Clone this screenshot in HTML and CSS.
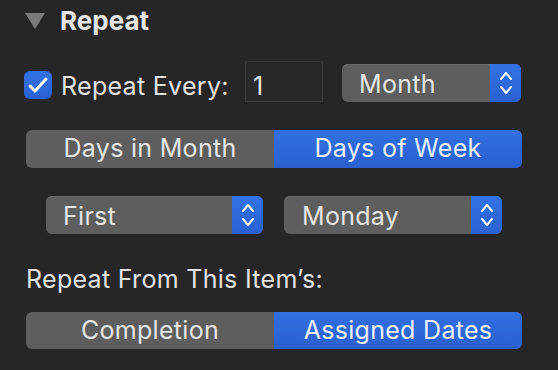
FILE: index.html
```html
<!DOCTYPE html>
<html>
<head>
<meta charset="utf-8">
<link rel="stylesheet" href="styles.css">
</head>
<body>
<div class="panel">
  <div class="header">
    <svg class="disclosure" width="20" height="16" viewBox="0 0 20 16"><polygon points="0,0 20,0 10,16" fill="#7a7a7a"/></svg>
    <span class="title">Repeat</span>
  </div>

  <div class="row1">
    <span class="checkbox">
      <svg width="28" height="28" viewBox="0 0 28 28"><polyline points="6,15 11,20 22,8" fill="none" stroke="#fff" stroke-width="3" stroke-linecap="round" stroke-linejoin="round"/></svg>
    </span>
    <span class="label every">Repeat Every:</span>
    <span class="field">1</span>
    <div class="popup month">
      <span class="popup-text">Month</span>
      <span class="popup-arrows">
        <svg width="14" height="24" viewBox="0 0 14 24"><polyline points="2,8 7,2 12,8" fill="none" stroke="#fff" stroke-width="2" stroke-linecap="round" stroke-linejoin="round"/><polyline points="2,16 7,22 12,16" fill="none" stroke="#fff" stroke-width="2" stroke-linecap="round" stroke-linejoin="round"/></svg>
      </span>
    </div>
  </div>

  <div class="segmented seg1">
    <span class="seg">Days in Month</span>
    <span class="seg active">Days of Week</span>
  </div>

  <div class="row3">
    <div class="popup first">
      <span class="popup-text">First</span>
      <span class="popup-arrows">
        <svg width="14" height="24" viewBox="0 0 14 24"><polyline points="2,8 7,2 12,8" fill="none" stroke="#fff" stroke-width="2" stroke-linecap="round" stroke-linejoin="round"/><polyline points="2,16 7,22 12,16" fill="none" stroke="#fff" stroke-width="2" stroke-linecap="round" stroke-linejoin="round"/></svg>
      </span>
    </div>
    <div class="popup monday">
      <span class="popup-text">Monday</span>
      <span class="popup-arrows">
        <svg width="14" height="24" viewBox="0 0 14 24"><polyline points="2,8 7,2 12,8" fill="none" stroke="#fff" stroke-width="2" stroke-linecap="round" stroke-linejoin="round"/><polyline points="2,16 7,22 12,16" fill="none" stroke="#fff" stroke-width="2" stroke-linecap="round" stroke-linejoin="round"/></svg>
      </span>
    </div>
  </div>

  <div class="label from">Repeat From This Item’s:</div>

  <div class="segmented seg2">
    <span class="seg">Completion</span>
    <span class="seg active">Assigned Dates</span>
  </div>
</div>
</body>
</html>
```

FILE: styles.css
```css
html, body {
  margin: 0;
  padding: 0;
  background: #262626;
}
body {
  width: 558px;
  height: 370px;
  overflow: hidden;
  font-family: Inter, "Liberation Sans", sans-serif;
  color: #e3e3e3;
  font-size: 25px;
  letter-spacing: 0.3px;
  line-height: 24px;
}
.panel {
  display: flex;
  flex-direction: column;
  align-items: flex-start;
}
.header {
  display: flex;
  align-items: center;
  height: 42px;
  margin-left: 25px;
}
.disclosure {
  display: block;
  margin-right: 15px;
}
.title {
  font-size: 26px;
  line-height: 26px;
  letter-spacing: 0;
  font-weight: 700;
  color: #e6e6e6;
}
.row1 {
  display: flex;
  align-items: flex-start;
  margin-top: 19px;
  margin-left: 24px;
  height: 41px;
}
.checkbox {
  width: 28px;
  height: 28px;
  margin-top: 10px;
  border-radius: 6px;
  background: linear-gradient(#3272e6, #2b61d2);
  display: block;
}
.checkbox svg { display: block; }
.label {
  color: #e3e3e3;
}
.every {
  margin-left: 9px;
  margin-top: 13px;
  width: 164px;
  white-space: nowrap;
}
.field {
  box-sizing: border-box;
  width: 78px;
  height: 41px;
  margin-left: 20px;
  background: #292929;
  border: 1px solid #3d3d3d;
  border-top-color: #353535;
  padding: 12px 0 0 7px;
  color: #e6e6e6;
}
.popup {
  display: flex;
  box-sizing: border-box;
  height: 38px;
  border-radius: 6px;
  background: #5e5e5e;
  overflow: hidden;
  box-shadow: inset 0 1px 0 #6a6a6a;
}
.popup-text {
  flex: 1;
  padding: 8px 0 0 17px;
  color: #e6e6e6;
}
.popup-arrows {
  width: 31px;
  display: flex;
  align-items: center;
  justify-content: center;
  background: linear-gradient(#3272e6, #2b61d2);
}
.popup-arrows svg { display: block; }
.month {
  width: 179px;
  margin-left: 19px;
  margin-top: 3px;
}
.segmented {
  display: flex;
  margin-left: 26px;
  width: 496px;
  border-radius: 6px;
  overflow: hidden;
  background: #5e5e5e;
}
.seg1 {
  margin-top: 28px;
  height: 38px;
}
.seg2 {
  margin-top: 21px;
  height: 37px;
}
.seg {
  flex: 1;
  display: flex;
  align-items: center;
  justify-content: center;
  padding-bottom: 2px;
  color: #e6e6e6;
}
.seg.active {
  background: linear-gradient(#3170e4, #2b5fcf);
  color: #ebf0fc;
}
.row3 {
  display: flex;
  margin-top: 28px;
  margin-left: 46px;
  gap: 21px;
}
.first { width: 217px; }
.monday { width: 218px; }
.first .popup-text { padding-left: 17px; }
.monday .popup-text { padding-left: 18px; }
.from {
  margin-top: 33px;
  margin-left: 26px;
}
```
